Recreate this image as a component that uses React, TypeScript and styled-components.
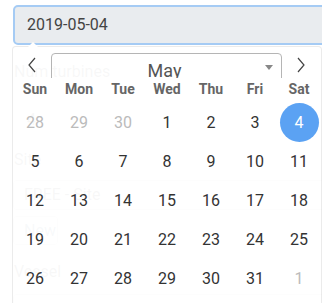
import styled, {createGlobalStyle} from "styled-components";

const GlobalStyle = createGlobalStyle`
    html, body {
        margin: 0;
        padding: 0;
        background: #fff;
        overflow: hidden;
    }
    body {
        font-family: Roboto, "Liberation Sans", sans-serif;
        color: #333;
    }
`;

const weekdays = ["Sun", "Mon", "Tue", "Wed", "Thu", "Fri", "Sat"];

// may 2019, with the days of april and june round it
const days = [
    [28, 29, 30, 1, 2, 3, 4],
    [5, 6, 7, 8, 9, 10, 11],
    [12, 13, 14, 15, 16, 17, 18],
    [19, 20, 21, 22, 23, 24, 25],
    [26, 27, 28, 29, 30, 31, 1],
];

function isOther(row, value) {
    return (row === 0 && value > 20) || (row === 4 && value < 10);
}

function Chevron({dir}) {
    return (
        <svg width="10" height="16" viewBox="0 0 10 16">
            <polyline
                points={dir === "left" ? "8,1 2,8 8,15" : "2,1 8,8 2,15"}
                fill="none"
                stroke="#444"
                strokeWidth="1.2"
            />
        </svg>
    );
}

export default function App() {
    return (
        <Page>
            <GlobalStyle/>
            <Field>
                <DateInput>2019-05-04</DateInput>
                <Popup>
                    <Header>
                        <NavButton><Chevron dir="left"/></NavButton>
                        <MonthSelect>
                            <span>May</span>
                            <Caret/>
                        </MonthSelect>
                        <NavButton><Chevron dir="right"/></NavButton>
                    </Header>
                    <WeekRow>
                        {weekdays.map((d) => <WeekDay key={d}>{d}</WeekDay>)}
                    </WeekRow>
                    <DayGrid>
                        {days.map((week, r) =>
                            week.map((value, c) => (
                                <Day key={r + "-" + c} $other={isOther(r, value)}>
                                    <DayCircle $selected={r === 0 && value === 4}>{value}</DayCircle>
                                </Day>
                            ))
                        )}
                    </DayGrid>
                </Popup>
            </Field>
            <Label $top={17}>Num turbines</Label>
            <PlainValue>4</PlainValue>
            <Label $top={10}>Site</Label>
            <TextBox>FREE - Site</TextBox>
            <SmallButton>New</SmallButton>
            <Label $top={17}>Vessel</Label>
            <TextBox $top={12}></TextBox>
        </Page>
    );
}

const Page = styled.div`
    padding: 5px 0 0 13px;
    width: 340px;
`;

const Field = styled.div`
    position: relative;
`;

const DateInput = styled.div`
    box-sizing: border-box;
    width: 330px;
    height: 40px;
    padding: 0 12px;
    border: 2px solid #a5cbf4;
    border-radius: 5px;
    background: #e9ecef;
    font-size: 16px;
    line-height: 36px;
    color: #444;
`;

const Popup = styled.div`
    position: absolute;
    top: 41px;
    left: -1px;
    width: 308px;
    height: 290px;
    background: rgba(255, 255, 255, 0.965);
    border: 1px solid rgba(0, 0, 0, 0.08);
    border-radius: 4px;
    z-index: 2;

    &::before {
        content: "";
        position: absolute;
        top: -5px;
        left: 15px;
        border-left: 5px solid transparent;
        border-right: 5px solid transparent;
        border-bottom: 5px solid #fff;
    }
`;

const Header = styled.div`
    display: flex;
    align-items: flex-start;
    height: 31px;
    overflow: hidden;
`;

const NavButton = styled.div`
    display: flex;
    align-items: center;
    justify-content: center;
    width: 38px;
    height: 24px;
    margin-top: 6px;
`;

const MonthSelect = styled.div`
    box-sizing: border-box;
    display: flex;
    align-items: flex-start;
    width: 231px;
    height: 40px;
    margin-top: 6px;
    padding: 5px 8px 0 8px;
    border: 1px solid #b5b5b5;
    border-radius: 4px;
    font-size: 18px;
    line-height: 24px;
    color: #555;

    span {
        flex: 1;
        text-align: center;
        padding-left: 4px;
    }
`;

const Caret = styled.div`
    width: 0;
    height: 0;
    margin-top: 6px;
    border-left: 4px solid transparent;
    border-right: 4px solid transparent;
    border-top: 5px solid #888;
`;

const WeekRow = styled.div`
    display: grid;
    grid-template-columns: repeat(7, 44px);
    height: 22px;
    align-items: center;
`;

const WeekDay = styled.div`
    text-align: center;
    font-size: 14px;
    font-weight: 700;
    color: #666;
`;

const DayGrid = styled.div`
    display: grid;
    grid-template-columns: repeat(7, 44px);
    grid-auto-rows: 39px;
    padding-top: 3px;
`;

const Day = styled.div`
    display: flex;
    align-items: center;
    justify-content: center;
    font-size: 16px;
    color: ${(p) => (p.$other ? "#bbb" : "#333")};
`;

const DayCircle = styled.div`
    display: flex;
    align-items: center;
    justify-content: center;
    width: 39px;
    height: 39px;
    border-radius: 50%;
    background: ${(p) => (p.$selected ? "#5ba2f3" : "transparent")};
    color: ${(p) => (p.$selected ? "#fff" : "inherit")};
`;

const Label = styled.div`
    margin-top: ${(p) => p.$top}px;
    height: 20px;
    font-size: 16px;
    line-height: 20px;
    margin-left: 1px;
`;

const PlainValue = styled.div`
    margin-top: 18px;
    height: 40px;
    padding-left: 14px;
    font-size: 16px;
    line-height: 40px;
`;

const TextBox = styled.div`
    box-sizing: border-box;
    width: 320px;
    height: 30px;
    margin-top: ${(p) => p.$top ?? 10}px;
    padding-left: 10px;
    border: 1px solid #ccc;
    border-radius: 3px;
    font-size: 16px;
    line-height: 28px;
`;

const SmallButton = styled.div`
    box-sizing: border-box;
    width: 45px;
    height: 29px;
    margin-top: 6px;
    padding-left: 10px;
    border: 1px solid #ccc;
    border-radius: 3px;
    font-size: 16px;
    line-height: 27px;
    color: #357;
`;
